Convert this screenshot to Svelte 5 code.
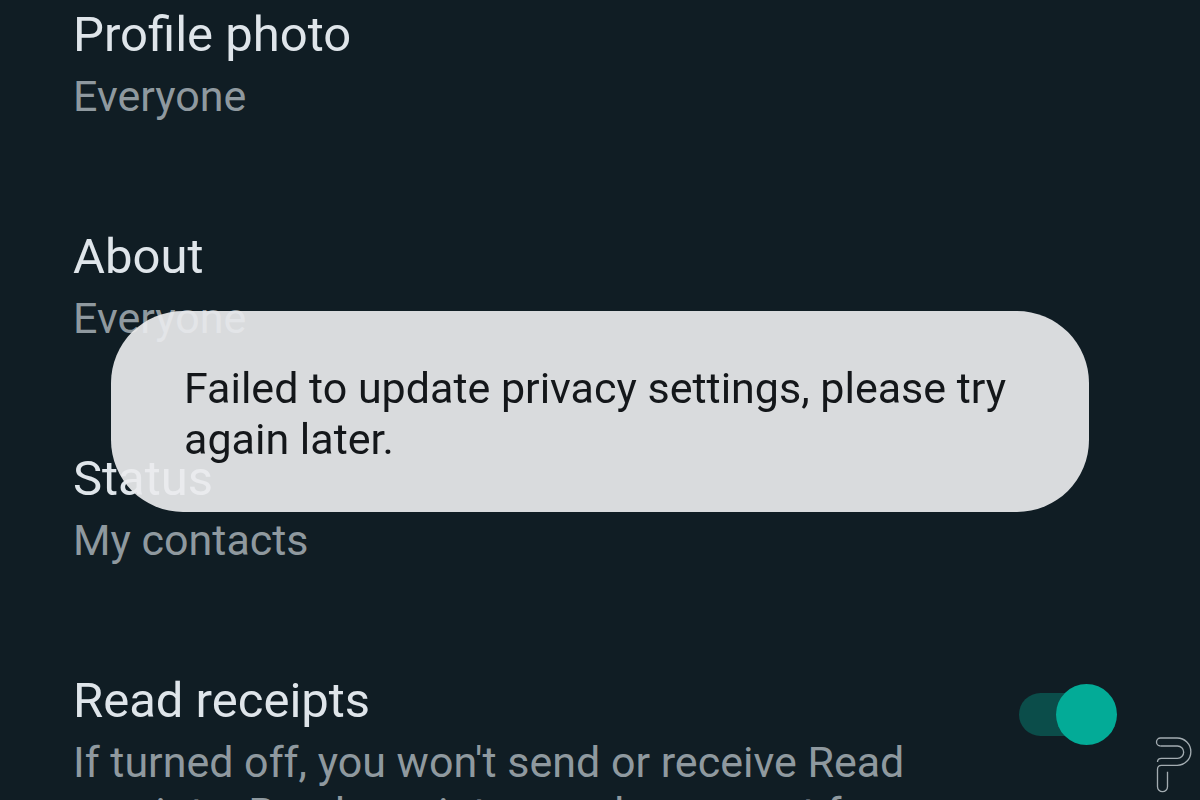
<script lang="ts">
  type Setting = { title: string; value: string };

  const settings: Setting[] = [
    { title: "Profile photo", value: "Everyone" },
    { title: "About", value: "Everyone" },
    { title: "Status", value: "My contacts" },
  ];

  let readReceipts = $state(true);
</script>

<main class="privacy">
  {#each settings as setting (setting.title)}
    <button type="button" class="row">
      <span class="title">{setting.title}</span>
      <span class="detail">{setting.value}</span>
    </button>
  {/each}

  <div class="row receipts">
    <label for="read-receipts">
      <span class="title">Read receipts</span>
      <span class="detail">
        If turned off, you won't send or receive Read receipts. Read receipts are always sent for
        group chats.
      </span>
    </label>
    <input id="read-receipts" class="switch" type="checkbox" bind:checked={readReceipts} />
  </div>

  <div class="toast" role="status">Failed to update privacy settings, please try again later.</div>

  <svg class="mark" viewBox="0 0 110 174" aria-hidden="true">
    <path
      d="M16 33 A12 12 0 0 1 16 9 H66 A41 41 0 0 1 66 91 H19 Q7 91 7 103 V155 A15 15 0 0 0 37 155 V110"
    />
    <path d="M16 33 H67 A18 18 0 0 1 67 70 H19 Q7 70 7 81" />
  </svg>
</main>

<style>
  :global(body) {
    background: #101d24;
    overflow: hidden;
  }

  .privacy {
    display: flex;
    flex-direction: column;
    gap: 106px;
    padding: 6px 83px 0 73px;
    font-family: Roboto, "Noto Sans", sans-serif;
  }

  .row {
    display: flex;
    flex-direction: column;
    gap: 7px;
    padding: 0;
    border: 0;
    background: none;
    font-family: inherit;
    text-align: left;
  }

  .title {
    font-size: 49px;
    line-height: 58px;
    color: #dfe5ea;
  }

  .detail {
    font-size: 43px;
    line-height: 51px;
    color: #8f999f;
  }

  .receipts {
    flex-direction: row;
    justify-content: space-between;
    align-items: flex-start;
  }

  .receipts label {
    display: flex;
    flex-direction: column;
    gap: 7px;
    max-width: 870px;
  }

  /* Switch */
  .switch {
    appearance: none;
    position: relative;
    flex: none;
    width: 98px;
    height: 61px;
    margin: 12px 0 0;
  }

  .switch::before {
    content: "";
    position: absolute;
    inset: 9px 8px 9px 0;
    border-radius: 22px;
    background: #0b4d4a;
  }

  .switch::after {
    content: "";
    position: absolute;
    top: 0;
    left: 0;
    width: 61px;
    height: 61px;
    border-radius: 50%;
    background: #8f999f;
  }

  .switch:checked::after {
    left: auto;
    right: 0;
    background: #03ab97;
  }

  /* Toast floats over the list, slightly see-through */
  .toast {
    position: fixed;
    top: 311px;
    left: 111px;
    right: 111px;
    padding: 52px 70px 47px 73px;
    border-radius: 72px;
    background: rgba(234, 235, 238, 0.92);
    font-size: 43px;
    line-height: 51px;
    color: #14171a;
  }

  .mark {
    position: fixed;
    right: 8px;
    bottom: 7px;
    width: 37px;
    height: 58px;
    fill: none;
    stroke: #a3acb1;
    stroke-width: 4;
  }
</style>
